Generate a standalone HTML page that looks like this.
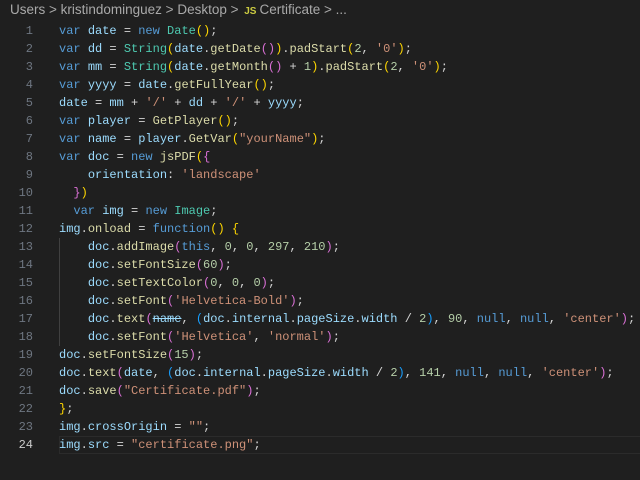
<!DOCTYPE html><html><head><style>
body{margin:0;width:640px;height:480px;background:#1f1f1f;overflow:hidden;font-family:"Liberation Mono",monospace;}
.bc{position:absolute;left:10px;top:2px;height:20px;line-height:20px;font:13.5px "Liberation Sans",sans-serif;color:#a9a9a9;white-space:nowrap}
.bc .js{color:#cbcb41;font-size:10px;font-weight:bold;margin:0 3px 0 2px}
.ln{position:absolute;left:0;width:33px;text-align:right;color:#6e7681;font-size:12px;line-height:18px}
.cd{position:absolute;left:59px;font-size:12px;line-height:18px;white-space:pre;color:#d4d4d4}
.k{color:#569cd6}.v{color:#9cdcfe}.f{color:#dcdcaa}.c{color:#4ec9b0}.s{color:#ce9178}.n{color:#b5cea8}.y{color:#ffd700}.m{color:#da70d6}.b{color:#179fff}
.st{text-decoration:line-through}
.cur{position:absolute;left:59px;top:436px;width:581px;height:16px;border:1px solid #2b2b2b}
.g{position:absolute;left:59px;width:1px;background:#404040;top:238px;height:108px}
</style></head><body>
<div class="bc">Users &gt; kristindominguez &gt; Desktop &gt; <span class="js">JS</span>Certificate &gt; ...</div>
<div class="cur"></div>
<div class="g"></div>
<div class="ln" style="top:22px">1<br>2<br>3<br>4<br>5<br>6<br>7<br>8<br>9<br>10<br>11<br>12<br>13<br>14<br>15<br>16<br>17<br>18<br>19<br>20<br>21<br>22<br>23<br><span style="color:#ccc">24</span></div>
<div class="cd" style="top:22px"><span class="k">var</span> <span class="v">date</span> = <span class="k">new</span> <span class="c">Date</span><span class="y">()</span>;
<span class="k">var</span> <span class="v">dd</span> = <span class="c">String</span><span class="y">(</span><span class="v">date</span>.<span class="f">getDate</span><span class="m">()</span><span class="y">)</span>.<span class="f">padStart</span><span class="y">(</span><span class="n">2</span>, <span class="s">'0'</span><span class="y">)</span>;
<span class="k">var</span> <span class="v">mm</span> = <span class="c">String</span><span class="y">(</span><span class="v">date</span>.<span class="f">getMonth</span><span class="m">()</span> + <span class="n">1</span><span class="y">)</span>.<span class="f">padStart</span><span class="y">(</span><span class="n">2</span>, <span class="s">'0'</span><span class="y">)</span>;
<span class="k">var</span> <span class="v">yyyy</span> = <span class="v">date</span>.<span class="f">getFullYear</span><span class="y">()</span>;
<span class="v">date</span> = <span class="v">mm</span> + <span class="s">'/'</span> + <span class="v">dd</span> + <span class="s">'/'</span> + <span class="v">yyyy</span>;
<span class="k">var</span> <span class="v">player</span> = <span class="f">GetPlayer</span><span class="y">()</span>;
<span class="k">var</span> <span class="v">name</span> = <span class="v">player</span>.<span class="f">GetVar</span><span class="y">(</span><span class="s">"yourName"</span><span class="y">)</span>;
<span class="k">var</span> <span class="v">doc</span> = <span class="k">new</span> <span class="f">jsPDF</span><span class="y">(</span><span class="m">{</span>
    <span class="v">orientation</span>: <span class="s">'landscape'</span>
  <span class="m">}</span><span class="y">)</span>
  <span class="k">var</span> <span class="v">img</span> = <span class="k">new</span> <span class="c">Image</span>;
<span class="v">img</span>.<span class="f">onload</span> = <span class="k">function</span><span class="y">()</span> <span class="y">{</span>
    <span class="v">doc</span>.<span class="f">addImage</span><span class="m">(</span><span class="k">this</span>, <span class="n">0</span>, <span class="n">0</span>, <span class="n">297</span>, <span class="n">210</span><span class="m">)</span>;
    <span class="v">doc</span>.<span class="f">setFontSize</span><span class="m">(</span><span class="n">60</span><span class="m">)</span>;
    <span class="v">doc</span>.<span class="f">setTextColor</span><span class="m">(</span><span class="n">0</span>, <span class="n">0</span>, <span class="n">0</span><span class="m">)</span>;
    <span class="v">doc</span>.<span class="f">setFont</span><span class="m">(</span><span class="s">'Helvetica-Bold'</span><span class="m">)</span>;
    <span class="v">doc</span>.<span class="f">text</span><span class="m">(</span><span class="v st">name</span>, <span class="b">(</span><span class="v">doc</span>.<span class="v">internal</span>.<span class="v">pageSize</span>.<span class="v">width</span> / <span class="n">2</span><span class="b">)</span>, <span class="n">90</span>, <span class="k">null</span>, <span class="k">null</span>, <span class="s">'center'</span><span class="m">)</span>;
    <span class="v">doc</span>.<span class="f">setFont</span><span class="m">(</span><span class="s">'Helvetica'</span>, <span class="s">'normal'</span><span class="m">)</span>;
<span class="v">doc</span>.<span class="f">setFontSize</span><span class="m">(</span><span class="n">15</span><span class="m">)</span>;
<span class="v">doc</span>.<span class="f">text</span><span class="m">(</span><span class="v">date</span>, <span class="b">(</span><span class="v">doc</span>.<span class="v">internal</span>.<span class="v">pageSize</span>.<span class="v">width</span> / <span class="n">2</span><span class="b">)</span>, <span class="n">141</span>, <span class="k">null</span>, <span class="k">null</span>, <span class="s">'center'</span><span class="m">)</span>;
<span class="v">doc</span>.<span class="f">save</span><span class="m">(</span><span class="s">"Certificate.pdf"</span><span class="m">)</span>;
<span class="y">}</span>;
<span class="v">img</span>.<span class="v">crossOrigin</span> = <span class="s">""</span>;
<span class="v">img</span>.<span class="v">src</span> = <span class="s">"certificate.png"</span>;</div>
</body></html>
